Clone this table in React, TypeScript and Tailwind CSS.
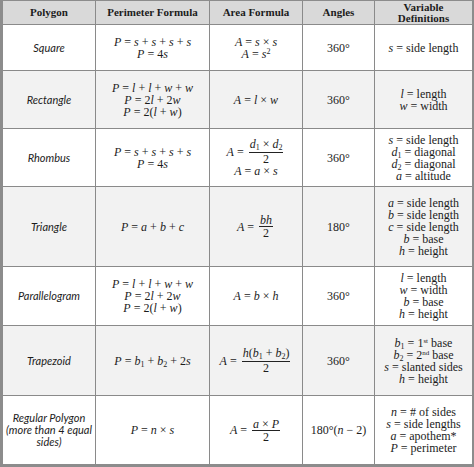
import * as React from 'react';

const serif = "font-['Liberation_Serif',serif]";

// tiny math renderer: letters italic, _x subscript, ^x superscript
function M({ t }: { t: string }) {
  const out: React.ReactNode[] = [];
  for (let i = 0; i < t.length; i++) {
    const c = t[i];
    if (c === '_' || c === '^') {
      const n = t[i + 1];
      i++;
      out.push(
        <span key={i} className={`text-[8px] leading-none ${c === '_' ? 'align-[-2px]' : 'align-[4px]'}`}>
          {n}
        </span>
      );
    } else if (/[a-zA-Z]/.test(c)) {
      out.push(<i key={i}>{c}</i>);
    } else {
      out.push(<span key={i}>{c}</span>);
    }
  }
  return <span className="whitespace-pre h-[12px]">{out}</span>;
}

// definition line: "x = words" -> variable italic, words upright
function Def({ v, d }: { v: string; d: React.ReactNode }) {
  return (
    <div className="whitespace-nowrap h-[12px]">
      <M t={v} /> = {d}
    </div>
  );
}

function Frac({ num, den }: { num: React.ReactNode; den: React.ReactNode }) {
  return (
    <span className="inline-flex flex-col items-center align-middle mx-[2px]">
      <span className="border-b border-[#222] px-[1px] leading-[12px]">{num}</span>
      <span className="leading-[12px]">{den}</span>
    </span>
  );
}

const Name = ({ children }: { children: React.ReactNode }) => (
  <span className="font-['Lato',sans-serif] italic text-[11px] leading-[12px] text-center">{children}</span>
);

const Ord = ({ n, s }: { n: string; s: string }) => (
  <>
    {n}
    <span className="align-[4px] text-[7px] leading-none">{s}</span>
  </>
);

type Row = {
  name: React.ReactNode;
  perim: React.ReactNode;
  area: React.ReactNode;
  angle: React.ReactNode;
  defs: React.ReactNode;
  h: string;
  gray: boolean;
};

const rows: Row[] = [
  {
    name: 'Square',
    perim: (
      <>
        <M t="P = s + s + s + s" />
        <M t="P = 4s" />
      </>
    ),
    area: (
      <>
        <M t="A = s × s" />
        <M t="A = s^2" />
      </>
    ),
    angle: '360°',
    defs: <Def v="s" d="side length" />,
    h: 'h-[46px]',
    gray: false,
  },
  {
    name: 'Rectangle',
    perim: (
      <>
        <M t="P = l + l + w + w" />
        <M t="P = 2l + 2w" />
        <M t="P = 2(l + w)" />
      </>
    ),
    area: <M t="A = l × w" />,
    angle: '360°',
    defs: (
      <>
        <Def v="l" d="length" />
        <Def v="w" d="width" />
      </>
    ),
    h: 'h-[58px]',
    gray: true,
  },
  {
    name: 'Rhombus',
    perim: (
      <>
        <M t="P = s + s + s + s" />
        <M t="P = 4s" />
      </>
    ),
    area: (
      <>
        <div className="flex items-center">
          <M t="A = " />
          <Frac num={<M t="d_1 × d_2" />} den="2" />
        </div>
        <M t="A = a × s" />
      </>
    ),
    angle: '360°',
    defs: (
      <>
        <Def v="s" d="side length" />
        <Def v="d_1" d="diagonal" />
        <Def v="d_2" d="diagonal" />
        <Def v="a" d="altitude" />
      </>
    ),
    h: 'h-[58px]',
    gray: false,
  },
  {
    name: 'Triangle',
    perim: <M t="P = a + b + c" />,
    area: (
      <div className="flex items-center">
        <M t="A = " />
        <Frac num={<M t="bh" />} den="2" />
      </div>
    ),
    angle: '180°',
    defs: (
      <>
        <Def v="a" d="side length" />
        <Def v="b" d="side length" />
        <Def v="c" d="side length" />
        <Def v="b" d="base" />
        <Def v="h" d="height" />
      </>
    ),
    h: 'h-[80px]',
    gray: true,
  },
  {
    name: 'Parallelogram',
    perim: (
      <>
        <M t="P = l + l + w + w" />
        <M t="P = 2l + 2w" />
        <M t="P = 2(l + w)" />
      </>
    ),
    area: <M t="A = b × h" />,
    angle: '360°',
    defs: (
      <>
        <Def v="l" d="length" />
        <Def v="w" d="width" />
        <Def v="b" d="base" />
        <Def v="h" d="height" />
      </>
    ),
    h: 'h-[59px]',
    gray: false,
  },
  {
    name: 'Trapezoid',
    perim: <M t="P = b_1 + b_2 + 2s" />,
    area: (
      <div className="flex items-center">
        <M t="A = " />
        <Frac num={<M t="h(b_1 + b_2)" />} den="2" />
      </div>
    ),
    angle: '360°',
    defs: (
      <>
        <Def v="b_1" d={<><Ord n="1" s="st" /> base</>} />
        <Def v="b_2" d={<><Ord n="2" s="nd" /> base</>} />
        <Def v="s" d="slanted sides" />
        <Def v="h" d="height" />
      </>
    ),
    h: 'h-[70px]',
    gray: true,
  },
  {
    name: (
      <>
        Regular Polygon
        <br />
        (more than 4 equal
        <br />
        sides)
      </>
    ),
    perim: <M t="P = n × s" />,
    area: (
      <div className="flex items-center">
        <M t="A = " />
        <Frac num={<M t="a × P" />} den="2" />
      </div>
    ),
    angle: (
      <span className="whitespace-nowrap">
        180°(<i>n</i> − 2)
      </span>
    ),
    defs: (
      <>
        <Def v="n" d="# of sides" />
        <Def v="s" d="side lengths" />
        <Def v="a" d="apothem*" />
        <Def v="P" d="perimeter" />
      </>
    ),
    h: 'h-[68px]',
    gray: false,
  },
];

const cols = 'grid grid-cols-[93px_114px_93px_72px_97px]';
const cell = 'flex flex-col items-center justify-center text-center border-r border-[#8a8a8a]';

export default function App() {
  return (
    <div className="w-[474px] h-[467px] bg-white text-[#1c1c1c] border-l-[3px] border-r-[2px] border-t border-b-[3px] border-[#8c8c8c]">
      <div className={`${cols} h-[24px] bg-[#d9d9d9] border-b border-[#8a8a8a] ${serif} font-bold text-[11px] leading-[11px]`}>
        <div className={cell}>Polygon</div>
        <div className={cell}>Perimeter Formula</div>
        <div className={cell}>Area Formula</div>
        <div className={cell}>Angles</div>
        <div className={`${cell} border-r-0`}>
          <span>Variable</span>
          <span>Definitions</span>
        </div>
      </div>
      {rows.map((r, i) => (
        <div
          key={i}
          className={`${cols} ${r.h} ${r.gray ? 'bg-[#f2f2f2]' : 'bg-white'} ${
            i < rows.length - 1 ? 'border-b border-[#8a8a8a]' : ''
          } ${serif} text-[12px] leading-[12px]`}
        >
          <div className={cell}>
            <Name>{r.name}</Name>
          </div>
          <div className={cell}>{r.perim}</div>
          <div className={cell}>{r.area}</div>
          <div className={cell}>{r.angle}</div>
          <div className={`${cell} border-r-0`}>{r.defs}</div>
        </div>
      ))}
    </div>
  );
}
